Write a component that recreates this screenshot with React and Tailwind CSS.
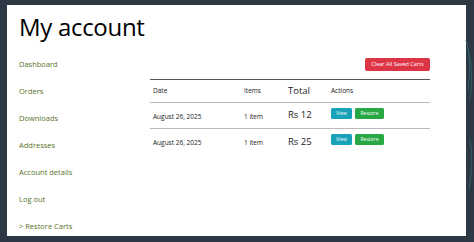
export default function App() {
  const nav = ["Dashboard", "Orders", "Downloads", "Addresses", "Account details", "Log out", "> Restore Carts"];
  const rows = [
    { date: "August 26, 2025", items: "1 item", total: "Rs 12" },
    { date: "August 26, 2025", items: "1 item", total: "Rs 25" },
  ];
  return (
    <div className="relative w-[474px] h-[242px] bg-[#2c3843] overflow-hidden pt-[5px] pl-[7px]" style={{ fontFamily: '"Open Sans", "Noto Sans", sans-serif' }}>
      <svg className="absolute right-0 top-0" width="10" height="242" viewBox="0 0 10 242">
        <path d="M2 40 Q8 60 4 90 M4 48 Q10 70 6 100 M6 140 Q10 160 5 190" stroke="#2f5d66" strokeWidth="1" fill="none" />
      </svg>
      <div className="w-[459px] h-[231px] bg-white pl-[12px] pt-[4px]">
        <h1 className="text-[24px] leading-[36px] text-black tracking-[-0.3px]">My account</h1>
        <div className="flex mt-[14px]">
          <ul className="w-[131px] flex flex-col">
            {nav.map((n) => (
              <li key={n} className="text-[7.5px] leading-[11px] h-[27px] text-[#567428]">{n}</li>
            ))}
          </ul>
          <div className="w-[280px]">
            <div className="flex justify-end">
              <button className="bg-[#dc3545] text-white text-[5.5px] rounded-[2px] w-[65px] h-[13px] mt-[-1px]">Clear All Saved Carts</button>
            </div>
            <table className="w-full mt-[8px] border-t-[1.5px] border-[#555] text-[6.5px] text-[#222] table-fixed">
              <thead>
                <tr className="h-[23px] border-b border-[#bbb]">
                  <th className="font-normal text-left pl-[3px] w-[94px]">Date</th>
                  <th className="font-normal text-left w-[44px]">Items</th>
                  <th className="font-normal text-left text-[9.5px] w-[43px]">Total</th>
                  <th className="font-normal text-left">Actions</th>
                </tr>
              </thead>
              <tbody>
                {rows.map((r, i) => (
                  <tr key={i} className={"h-[26px] " + (i === 0 ? "border-b border-[#bbb]" : "")}>
                    <td className="pl-[3px] pt-[2px]">{r.date}</td>
                    <td className="pt-[2px]">{r.items}</td>
                    <td className="text-[9.5px]">{r.total}</td>
                    <td className="align-top pt-[5px]">
                      <div className="flex gap-[3px]">
                        <span className="bg-[#17a2b8] text-white text-[5px] w-[21px] h-[11px] rounded-[1.5px] flex items-center justify-center">View</span>
                        <span className="bg-[#28a745] text-white text-[5px] w-[29px] h-[11px] rounded-[1.5px] flex items-center justify-center">Restore</span>
                      </div>
                    </td>
                  </tr>
                ))}
              </tbody>
            </table>
          </div>
        </div>
      </div>
    </div>
  );
}
